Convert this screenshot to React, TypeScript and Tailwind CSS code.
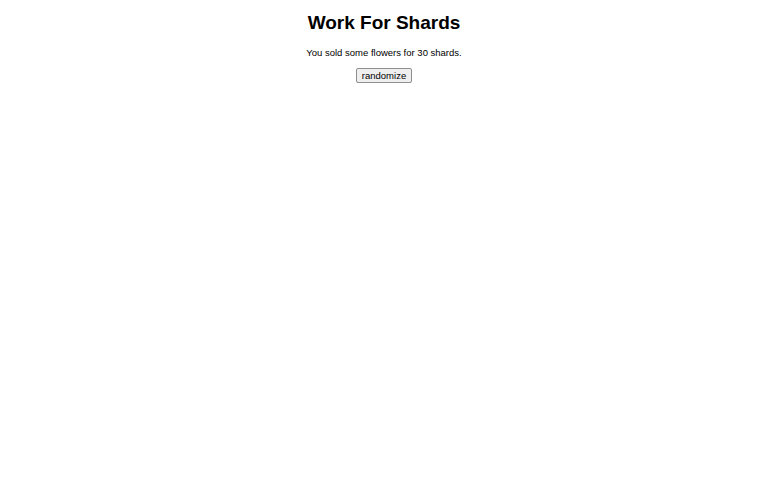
import React, { useState } from "react";

const jobs = [
	"You sold some flowers for 30 shards.",
	"You washed some dishes for 12 shards.",
	"You fixed a fence for 45 shards.",
	"You delivered some letters for 20 shards.",
];

const App = () => {
	const [job, setJob] = useState(0);
	return (
		<div className="flex flex-col items-center text-black bg-white font-['Liberation_Sans',Arial,sans-serif] min-h-screen">
			<h1 className="mt-[12px] text-[19px] leading-[22px] font-bold">Work For Shards</h1>
			<p className="mt-[13px] text-[9.5px] leading-[11px]">{jobs[job]}</p>
			<button
				onClick={() => setJob((job + 1) % jobs.length)}
				className="mt-[10px] px-[5px] py-[1px] text-[9.5px] leading-[11px] border border-[#8f8f8f] rounded-[2px] bg-[#efefef] hover:bg-[#e5e5e5]"
			>
				randomize
			</button>
		</div>
	);
};

export default App;
